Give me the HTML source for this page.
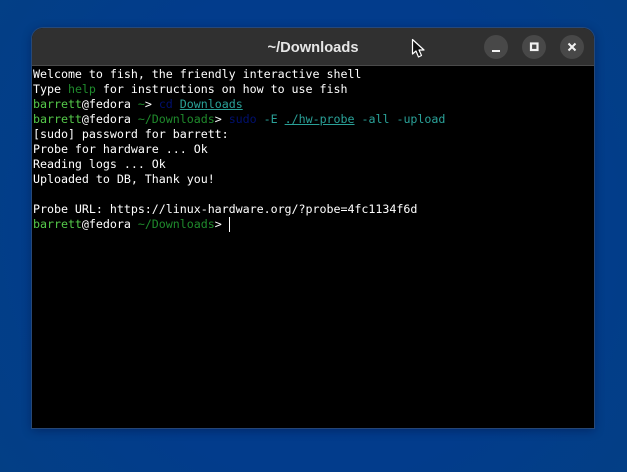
<!DOCTYPE html>
<html>
<head>
<meta charset="utf-8">
<style>
html,body{margin:0;padding:0;width:627px;height:472px;overflow:hidden;background:#023c88;}
#bg{position:absolute;left:0;top:0;width:627px;height:472px;background:radial-gradient(circle at 320px 230px,#01398a 0,#023c8c 60%,#033f85 100%);}
#win{position:absolute;left:32px;top:28px;width:562px;height:400px;background:#000;border-radius:11px 11px 0 0;box-shadow:0 0 0 1px rgba(70,90,120,.55),0 2px 10px rgba(0,10,50,.45);overflow:hidden;}
#bar{position:absolute;left:0;top:0;width:562px;height:37px;background:#303030;border-bottom:1px solid #4a4a4a;}
#title{position:absolute;left:0;top:10px;width:562px;text-align:center;color:#e6e6e6;font:bold 14.7px/19px "Liberation Sans",sans-serif;padding-top:0;transform:translateY(1px);}
.btn{position:absolute;top:7px;width:24px;height:24px;border-radius:50%;background:#484848;}
#term{position:absolute;left:33px;top:67px;width:558px;font-family:"DejaVu Sans Mono","Liberation Mono",monospace;font-size:11.67px;line-height:15px;color:#fff;}
#term div{height:15px;letter-spacing:-.03px;white-space:pre;}
.g{color:#55c94a}.d{color:#1f8a2c}.b{color:#00106e}.t{color:#2aa198}.u{text-decoration:underline}
#cursor{position:absolute;left:229px;top:217px;width:1px;height:15px;background:#fff;}
</style>
</head>
<body>
<div id="bg"></div>
<div id="win">
  <div id="bar">
    <div id="title">~/Downloads</div>
    <div class="btn" style="left:452px"></div>
    <div class="btn" style="left:490px"></div>
    <div class="btn" style="left:528px"></div>
    <svg style="position:absolute;left:452px;top:7px" width="24" height="24"><rect x="8" y="15" width="8" height="2" fill="#f2f2f2"/></svg>
    <svg style="position:absolute;left:490px;top:7px" width="24" height="24"><rect x="9" y="8.5" width="6.5" height="6.5" fill="none" stroke="#f2f2f2" stroke-width="2.2"/></svg>
    <svg style="position:absolute;left:528px;top:7px" width="24" height="24"><path d="M8.5 8.5L15.5 15.5M15.5 8.5L8.5 15.5" fill="none" stroke="#f2f2f2" stroke-width="2"/></svg>
  </div>
</div>
<div id="term"><div>Welcome to fish, the friendly interactive shell</div><div>Type <span class="d">help</span> for instructions on how to use fish</div><div><span class="g">barrett</span>@fedora <span class="d">~</span>&gt; <span class="b">cd</span> <span class="t u">Downloads</span></div><div><span class="g">barrett</span>@fedora <span class="d">~/Downloads</span>&gt; <span class="b">sudo</span> <span class="t">-E</span> <span class="t u">./hw-probe</span> <span class="t">-all -upload</span></div><div>[sudo] password for barrett:</div><div>Probe for hardware ... Ok</div><div>Reading logs ... Ok</div><div>Uploaded to DB, Thank you!</div><div></div><div>Probe URL: https://linux-hardware.org/?probe=4fc1134f6d</div><div><span class="g">barrett</span>@fedora <span class="d">~/Downloads</span>&gt; </div></div>
<div id="cursor"></div>
<svg style="position:absolute;left:411px;top:38px" width="16" height="22"><path d="M1.5 1.5L1.5 16L5 13L7.5 19L10.5 17.5L8 12L13 12Z" fill="#111" stroke="#fff" stroke-width="1.2" stroke-linejoin="round"/></svg>
</body>
</html>
